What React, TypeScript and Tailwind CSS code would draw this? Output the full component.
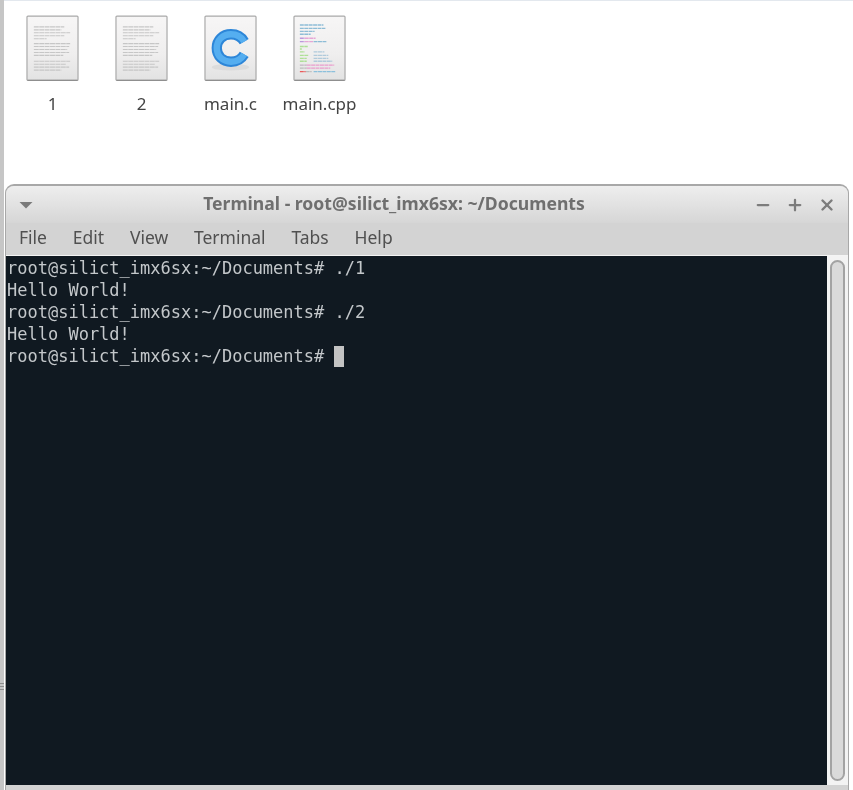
import React from 'react';
import { Minus, Plus, X } from 'lucide-react';

const PageIcon: React.FC<{ children?: React.ReactNode }> = ({ children }) => (
  <svg width="53" height="67" viewBox="0 0 54 68" className="block">
    <defs>
      <linearGradient id="pageFill" x1="0" y1="0" x2="0" y2="1">
        <stop offset="0" stopColor="#f7f6f6" />
        <stop offset="0.6" stopColor="#efeeee" />
        <stop offset="1" stopColor="#e2e2e2" />
      </linearGradient>
    </defs>
    <rect x="1" y="1" width="52" height="65.5" rx="1" fill="url(#pageFill)" stroke="#a9a9a9" strokeWidth="1.2" />
    <path d="M1.5 66.5h51" stroke="#8f8f8f" strokeWidth="1.2" />
    {children}
  </svg>
);

const TextLines = () => {
  const rows: [number, number][] = [
    [12, 31], [15, 28], [18, 37], [21, 31], [24, 13],
    [29, 37], [32, 36], [35, 34], [38, 36], [41, 30],
    [47, 37], [50, 33], [53, 36], [56, 28],
  ];
  return (
    <g stroke="#c6c6c6" strokeWidth="1.1" strokeDasharray="5 0.5">
      {rows.map(([y, w]) => (
        <path key={y} d={`M8 ${y}h${w}`} />
      ))}
    </g>
  );
};

const SourceLines = () => (
  <g strokeWidth="1.4" strokeDasharray="4 0.5">
    <path d="M7 10h24M7 13.500h26M7 16.500h15M7 19.500h11" stroke="#8dbcd6" />
    <path d="M7 23.500h5" stroke="#bc98dc" />
    <path d="M12 23.500h11" stroke="#e6a6d6" />
    <path d="M7 27h5" stroke="#bc98dc" />
    <path d="M12 27h9" stroke="#e6a6d6" />
    <path d="M21 27h13" stroke="#8dbcd6" />
    <path d="M7 32h8M7 34.500h2M7 37.500h5M7 41h9M7 44h7M7 47h7" stroke="#aee096" />
    <path d="M21 37.500h11M21 41h15M21 44h15M21 47h19" stroke="#b0cadb" />
    <path d="M7 51h7" stroke="#c2b4c2" />
    <path d="M14 51h28" stroke="#ea9ccd" />
    <path d="M7 54h7" stroke="#bcbcbc" />
    <path d="M14 54h24" stroke="#ea9ccd" />
    <path d="M7 57.500h6" stroke="#ea5b5b" />
    <path d="M13 57.500h6" stroke="#bcbcbc" />
    <path d="M21 57.500h22" stroke="#8cc0dc" />
  </g>
);

const C_PATH =
  'M41 27 C38 22 33 19.500 27.500 19.500 C19 19.500 13 25.500 13 33.500 C13 41.500 19 47.500 27.500 47.500 C33 47.500 38 45 41 40';

const CGlyph = () => (
  <g>
    <ellipse cx="27" cy="53" rx="19" ry="3.500" fill="#dcdcdc" />
    <path d={C_PATH} fill="none" stroke="#2d86d8" strokeWidth="10.500" />
    <path d={C_PATH} fill="none" stroke="#55aef0" strokeWidth="6.500" />
  </g>
);

const files: { name: string; art: React.ReactNode }[] = [
  { name: '1', art: <TextLines /> },
  { name: '2', art: <TextLines /> },
  { name: 'main.c', art: <CGlyph /> },
  { name: 'main.cpp', art: <SourceLines /> },
];

const lines = [
  'root@silict_imx6sx:~/Documents# ./1',
  'Hello World!',
  'root@silict_imx6sx:~/Documents# ./2',
  'Hello World!',
];

const menus = ['File', 'Edit', 'View', 'Terminal', 'Tabs', 'Help'];

export default function App() {
  return (
    <div className="flex h-[790px] w-[853px] overflow-hidden bg-white font-['Noto_Sans',sans-serif] blur-[0.5px]">
      {/* Desktop edge */}
      <div className="flex w-[4px] shrink-0 flex-col justify-end bg-[#c6c6c6] pb-[100px]">
        <div className="flex flex-col gap-[2px]">
          <div className="h-[1px] bg-[#8e8e8e]" />
          <div className="h-[1px] bg-[#8e8e8e]" />
          <div className="h-[1px] bg-[#8e8e8e]" />
        </div>
      </div>

      <div className="flex min-w-0 flex-1 flex-col">
        {/* File manager */}
        <div className="h-[184px] shrink-0 border-t border-[#e3e8ee]">
          <div className="flex pl-[4px] pt-[14px]">
            {files.map((f) => (
              <div key={f.name} className="flex w-[89px] flex-col items-center">
                <PageIcon>{f.art}</PageIcon>
                <span className="mt-[9px] text-[17px] leading-[26px] text-[#444444]">{f.name}</span>
              </div>
            ))}
          </div>
        </div>

        {/* Terminal window */}
        <div className="ml-[1px] mr-[4px] flex min-h-0 flex-1 flex-col rounded-t-[9px] border-x border-t-2 border-[#a8a8a8] bg-[#d3d3d3]">
          <div className="relative flex h-[37px] shrink-0 items-center rounded-t-[8px] bg-gradient-to-b from-[#eeeeee] to-[#d6d6d6]">
            <svg width="14" height="8" viewBox="0 0 14 8" className="ml-[13px]">
              <path d="M0.500 1h13L7 7.500z" fill="#7a7a7a" />
            </svg>
            <span className="absolute inset-x-0 top-[4px] pr-[66px] text-center text-[17.600px] leading-[26px] font-bold text-[#6f6f6f]">
              Terminal - root@silict_imx6sx: ~/Documents
            </span>
            <div className="ml-auto mr-[12px] flex items-center gap-[14px] text-[#7c7c7c]">
              <Minus size={18} strokeWidth={3} />
              <Plus size={18} strokeWidth={3} />
              <X size={18} strokeWidth={3.2} />
            </div>
          </div>

          <div className="flex h-[32px] shrink-0 items-center gap-[25.800px] pb-[4px] pl-[13px] text-[17.500px] text-[#505050]">
            {menus.map((m) => (
              <span key={m}>{m}</span>
            ))}
          </div>

          <div className="flex min-h-0 flex-1 border-t border-[#f4f4f4]">
            <div className="mb-[5px] min-w-0 flex-1 bg-[#101921] pl-[1px] pt-[1px] font-['DejaVu_Sans_Mono',monospace] text-[17px] leading-[22px] whitespace-pre text-[#c3c7ca]">
              {lines.map((l, i) => (
                <div key={i}>{l}</div>
              ))}
              <div className="flex items-center">
                <span>root@silict_imx6sx:~/Documents# </span>
                <span className="-ml-[1px] h-[21px] w-[10px] bg-[#c3c3c3]" />
              </div>
            </div>
            <div className="mb-[5px] flex w-[21px] shrink-0 justify-center bg-[#f3f3f3] py-[4px]">
              <div className="w-[15px] rounded-full border-2 border-[#a3a3a3] bg-[#dadada]" />
            </div>
          </div>
        </div>
      </div>
    </div>
  );
}
